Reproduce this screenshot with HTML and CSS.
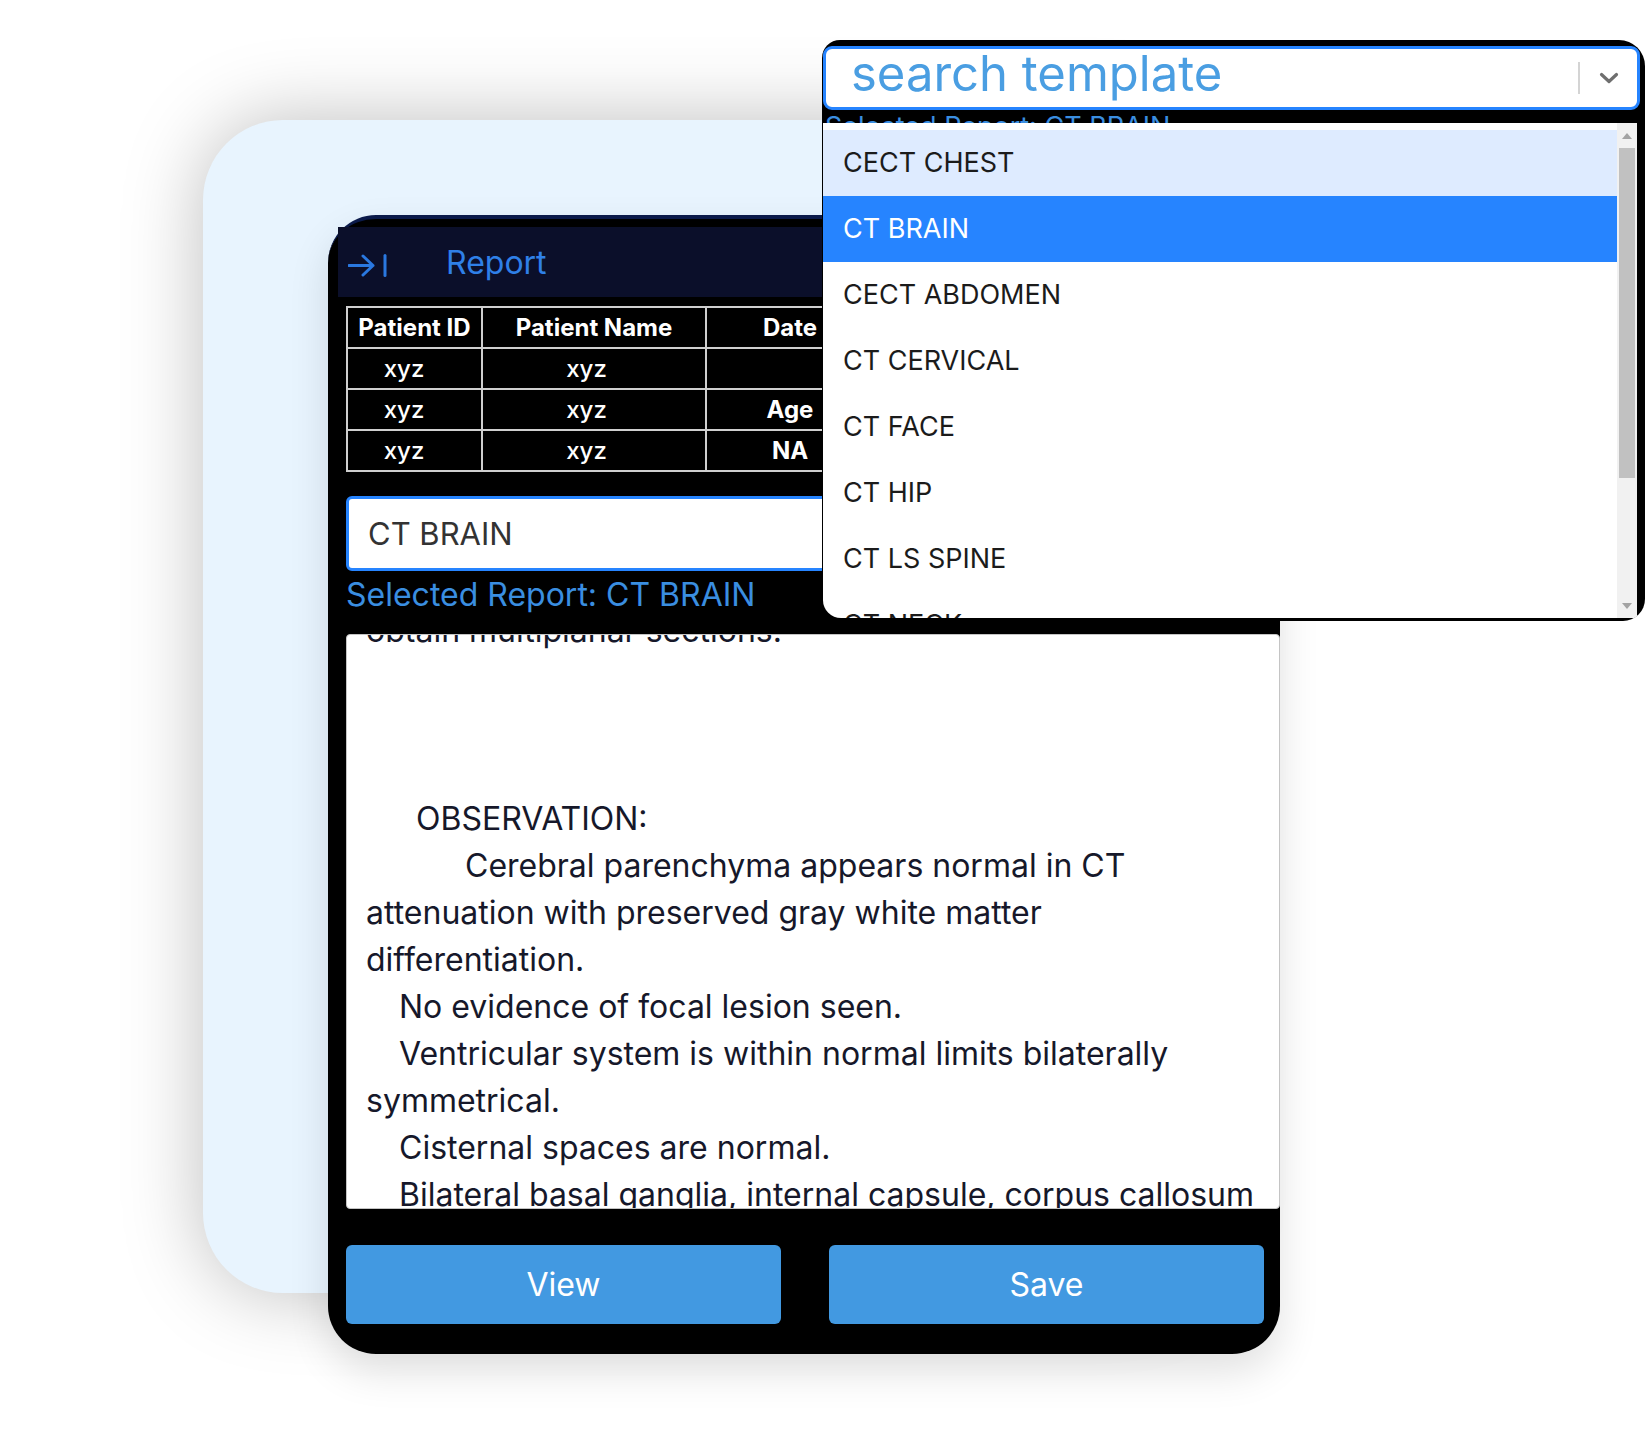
FILE: index.html
```html
<!DOCTYPE html>
<html lang="en">
<head>
<meta charset="utf-8">
<title>Report template picker</title>
<link rel="stylesheet" href="styles.css">
</head>
<body>
<div class="stage">
  <div class="backdrop"></div>

  <div class="device">
    <div class="device-header">
      <svg class="collapse-icon" viewBox="0 0 40 24" width="40" height="24" aria-hidden="true">
        <path d="M1 12.5H25M15 3l10 9.5L15 22" fill="none" stroke="#2a78e0" stroke-width="3" stroke-linecap="round" stroke-linejoin="round"/>
        <path d="M37 2.5V22.5" fill="none" stroke="#2a78e0" stroke-width="3" stroke-linecap="round"/>
      </svg>
      <span class="device-title">Report</span>
    </div>

    <div class="device-body">
      <table class="patient-table">
        <colgroup>
          <col class="c1"><col class="c2"><col class="c3"><col>
        </colgroup>
        <tr><th>Patient ID</th><th>Patient Name</th><th>Date</th><th></th></tr>
        <tr><td class="id">xyz</td><td class="name">xyz</td><td></td><td></td></tr>
        <tr><td class="id">xyz</td><td class="name">xyz</td><td class="strong">Age</td><td></td></tr>
        <tr><td class="id">xyz</td><td class="name">xyz</td><td class="strong">NA</td><td></td></tr>
      </table>

      <div class="template-select">CT BRAIN</div>
      <div class="selected-label">Selected Report: CT BRAIN</div>

      <div class="report-text">
        <div class="report-scroll">
          <p>obtain multiplanar sections.</p>
          <p>&nbsp;</p>
          <p>&nbsp;</p>
          <p>&nbsp;</p>
          <p class="indent-obs">OBSERVATION:</p>
          <p class="indent-para">Cerebral parenchyma appears normal in CT<br>attenuation with preserved gray white matter<br>differentiation.</p>
          <p class="indent-sm">No evidence of focal lesion seen.</p>
          <p class="indent-sm">Ventricular system is within normal limits bilaterally<br>symmetrical.</p>
          <p class="indent-sm">Cisternal spaces are normal.</p>
          <p class="indent-sm">Bilateral basal ganglia, internal capsule, corpus callosum</p>
        </div>
      </div>

      <div class="actions">
        <div class="btn">View</div>
        <div class="btn">Save</div>
      </div>
    </div>
  </div>

  <div class="picker">
    <div class="search-input">
      <span class="search-placeholder">search template</span>
      <span class="indicator-sep"></span>
      <span class="indicator">
        <svg viewBox="0 0 20 12" width="20" height="12" aria-hidden="true">
          <path d="M2.5 2.5L10 9.5L17.5 2.5" fill="none" stroke="#6f6f6f" stroke-width="3.2" stroke-linecap="round" stroke-linejoin="round"/>
        </svg>
      </span>
    </div>
    <div class="gap-strip"><div class="ghost-label">Selected Report: CT BRAIN</div></div>
    <div class="menu">
      <div class="options">
        <div class="option focused">CECT CHEST</div>
        <div class="option selected">CT BRAIN</div>
        <div class="option">CECT ABDOMEN</div>
        <div class="option">CT CERVICAL</div>
        <div class="option">CT FACE</div>
        <div class="option">CT HIP</div>
        <div class="option">CT LS SPINE</div>
        <div class="option">CT NECK</div>
      </div>
      <div class="scrollbar">
        <div class="scroll-btn"><span class="tri-up"></span></div>
        <div class="thumb"></div>
        <div class="track-rest"></div>
        <div class="scroll-btn"><span class="tri-down"></span></div>
      </div>
    </div>
  </div>
</div>
</body>
</html>
```

FILE: styles.css
```css
* { box-sizing: border-box; }

body {
  margin: 0;
  background: #ffffff;
  font-family: Inter, "Noto Sans", sans-serif;
}

.stage {
  position: relative;
  width: 1647px;
  height: 1446px;
  overflow: hidden;
}

/* light blue backdrop panel */
.backdrop {
  position: absolute;
  left: 203px;
  top: 120px;
  width: 1000px;
  height: 1173px;
  border-radius: 80px;
  background: #e8f4fe;
  box-shadow: 0 0 80px rgba(0, 0, 0, 0.26);
}

/* dark app window */
.device {
  position: absolute;
  left: 328px;
  top: 215px;
  width: 952px;
  height: 1139px;
  border-radius: 48px;
  background: #000;
  border-top: 4px solid #0b1a4a;
  padding-top: 8px;
  box-shadow: 0 18px 40px rgba(0, 0, 0, 0.12);
  display: flex;
  flex-direction: column;
}

.device-header {
  margin: 0 10px;
  height: 70px;
  background: #0b0f2a;
  display: flex;
  align-items: center;
  padding-left: 10px;
}

.collapse-icon {
  display: block;
  margin-top: 6px;
}

.device-title {
  margin-left: 58px;
  font-size: 32px;
  color: #2f80e8;
}

.device-body {
  padding: 9px 16px 0 18px;
  display: flex;
  flex-direction: column;
}

.patient-table {
  border-collapse: collapse;
  width: 100%;
  color: #fff;
  font-size: 24px;
}

.patient-table col.c1 { width: 135px; }
.patient-table col.c2 { width: 224px; }
.patient-table col.c3 { width: 168px; }

.patient-table th,
.patient-table td {
  border: 2px solid #cfcfcf;
  height: 41px;
  padding: 0;
  text-align: center;
  font-weight: 500;
}

.patient-table td.id { padding-right: 21px; }
.patient-table td.name { padding-right: 15px; }

.patient-table th,
.patient-table td.strong { font-weight: 700; }

.template-select {
  margin-top: 24px;
  height: 75px;
  border: 3px solid #2684ff;
  border-radius: 6px;
  background: #fff;
  display: flex;
  align-items: center;
  padding-left: 19px;
  font-size: 31px;
  color: #333;
}

.selected-label {
  margin-top: 6px;
  font-size: 32px;
  line-height: 36px;
  color: #3a8ee0;
}

.report-text {
  margin-top: 21px;
  margin-right: -16px;
  height: 575px;
  background: #fff;
  border: 1px solid #c4c4c4;
  border-radius: 4px;
  overflow: hidden;
  padding: 0 20px 0 19px;
  font-size: 32px;
  line-height: 47px;
  color: #16182a;
}

.report-scroll { margin-top: -28px; }

.report-text p {
  margin: 0;
  white-space: nowrap;
}

.report-text .indent-obs { text-indent: 50px; }
.report-text .indent-para { text-indent: 99px; }
.report-text .indent-sm { text-indent: 33px; }

.actions {
  margin-top: 36px;
  display: flex;
  gap: 48px;
}

.btn {
  flex: 1;
  height: 79px;
  border-radius: 6px;
  background: #4299e1;
  color: #fff;
  font-size: 32px;
  display: flex;
  align-items: center;
  justify-content: center;
}

/* zoomed dropdown overlay */
.picker {
  position: absolute;
  left: 822px;
  top: 40px;
  width: 823px;
  height: 581px;
  background: #000;
  border-radius: 18px 26px 22px 16px;
  padding: 6px 5px 0 1px;
  display: flex;
  flex-direction: column;
  overflow: hidden;
}

.search-input {
  height: 64px;
  flex: none;
  border: 3px solid #2684ff;
  border-radius: 9px;
  background: #fff;
  display: flex;
  align-items: center;
}

.search-placeholder {
  flex: 1;
  padding-left: 25px;
  font-size: 49px;
  line-height: 58px;
  margin-top: -8px;
  color: #4a9ee2;
  white-space: nowrap;
}

.indicator-sep {
  width: 2px;
  height: 32px;
  background: #d4d4d4;
}

.indicator {
  width: 57px;
  display: flex;
  justify-content: center;
  align-items: center;
}

.indicator svg { display: block; }

.gap-strip {
  height: 13px;
  flex: none;
  overflow: hidden;
  padding-left: 2px;
}

.ghost-label {
  margin-top: 1px;
  font-size: 27px;
  line-height: 32px;
  color: #3a8ee0;
  white-space: nowrap;
}

.menu {
  height: 495px;
  flex: none;
  margin-right: 3px;
  display: flex;
  background: #fff;
  border-radius: 0 0 0 18px;
  overflow: hidden;
}

.options {
  flex: 1;
  padding-top: 7px;
  overflow: hidden;
}

.option {
  height: 66px;
  line-height: 66px;
  padding-left: 20px;
  font-size: 27px;
  color: #1b1b1b;
  white-space: nowrap;
}

.option.focused { background: #deebff; }
.option.selected { background: #2684ff; color: #fff; }

.scrollbar {
  width: 20px;
  background: #f1f1f1;
  display: flex;
  flex-direction: column;
  align-items: center;
}

.scroll-btn {
  height: 25px;
  width: 100%;
  display: flex;
  align-items: center;
  justify-content: center;
}

.tri-up {
  width: 0;
  height: 0;
  border-left: 5px solid transparent;
  border-right: 5px solid transparent;
  border-bottom: 6px solid #a3a3a3;
}

.tri-down {
  width: 0;
  height: 0;
  border-left: 5px solid transparent;
  border-right: 5px solid transparent;
  border-top: 6px solid #a3a3a3;
}

.thumb {
  width: 16px;
  height: 330px;
  background: #c1c1c1;
}

.track-rest { flex: 1; }
```
